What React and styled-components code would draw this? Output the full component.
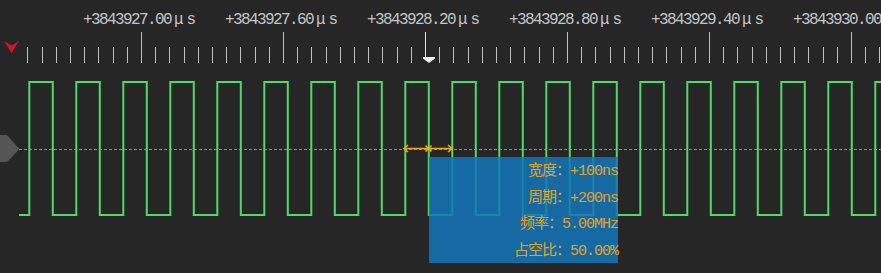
import React from "react";
import styled, { createGlobalStyle } from "styled-components";

const GlobalStyle = createGlobalStyle`
  html, body {
    margin: 0;
    padding: 0;
    background: #262626;
  }
`;

const TICK = 14.2;
const MAJOR0 = 141;
const PERIOD = 47;
const RISE0 = 29.3;
const HIGH_Y = 12;
const LOW_Y = 145;

const labels = [
  "+3843927.00",
  "+3843927.60",
  "+3843928.20",
  "+3843928.80",
  "+3843929.40",
  "+3843930.00",
];

const Screen = styled.div`
  width: 881px;
  height: 273px;
  overflow: hidden;
  background: #262626;
  display: flex;
  flex-direction: column;
  font-family: "Liberation Mono", "Noto Sans CJK SC", monospace;
`;

const Ruler = styled.div`
  height: 70px;
  display: flex;
  flex-direction: column;
`;

const LabelRow = styled.div`
  height: 32px;
  display: flex;
  padding-left: 70px;
  white-space: nowrap;
`;

const Label = styled.div`
  width: 142px;
  flex: none;
  text-align: center;
  line-height: 40px;
  font-size: 16px;
  letter-spacing: -1.6px;
  color: #c4c4c4;
`;

const Unit = styled.span`
  letter-spacing: 3px;
  margin-left: 3px;
`;

const TickSvg = styled.svg`
  display: block;
`;

const Scope = styled.div`
  position: relative;
  flex: 1;
`;

const WaveSvg = styled.svg`
  display: block;
`;

const Readout = styled.div`
  position: absolute;
  left: 429px;
  top: 87px;
  width: 189px;
  height: 106px;
  background: rgba(20, 118, 184, 0.86);
  display: flex;
  flex-direction: column;
  align-items: flex-end;
`;

const ReadoutLine = styled.div`
  height: 26.5px;
  line-height: 29px;
  font-size: 15px;
  letter-spacing: -1px;
  color: #e5a21f;
  white-space: nowrap;
`;

function Ticks() {
  const items = [];
  for (let k = -8; k <= 52; k++) {
    const x = Math.round(MAJOR0 + k * TICK) + 0.5;
    const major = k % 10 === 0;
    const cursor = k === 20;
    items.push(
      <line
        key={k}
        x1={x}
        x2={x}
        y1={major ? 0 : 15}
        y2={cursor ? 25 : 31}
        stroke={cursor ? "#e8e8e8" : "#bdbdbd"}
        strokeWidth="1"
      />
    );
  }
  return (
    <TickSvg width="881" height="38" viewBox="0 0 881 38">
      <polygon points="4,9 11.5,13.5 19,9 11.5,21" fill="#d5132b" />
      {items}
      <polygon points="423,25 435,25 435,26.5 429,31 423,26.5" fill="#f2f2f2" />
    </TickSvg>
  );
}

function wavePath() {
  let d = `M19 ${LOW_Y}`;
  for (let k = 0; k < 19; k++) {
    const rise = RISE0 + k * PERIOD;
    const fall = rise + PERIOD / 2;
    if (rise > 881) break;
    d += ` H${rise.toFixed(1)} V${HIGH_Y} H${fall.toFixed(1)} V${LOW_Y}`;
  }
  d += " H881";
  return d;
}

function Wave() {
  return (
    <WaveSvg width="881" height="203" viewBox="0 0 881 203">
      <polygon points="0,65 7,65 19.5,79 7,92 0,92" fill="#555555" />
      <line
        x1="19"
        x2="881"
        y1="79.5"
        y2="79.5"
        stroke="#8e8e8e"
        strokeWidth="1"
        strokeDasharray="3 2"
      />
      <path d={wavePath()} fill="none" stroke="#52d866" strokeWidth="2" />
      <g stroke="#f0a818" strokeWidth="1.6" fill="none">
        <line x1="404" x2="452" y1="78.5" y2="78.5" />
        <polyline points="408,75 404,78.5 408,82" />
        <polyline points="448,75 452,78.5 448,82" />
        <line x1="425.5" x2="431.5" y1="75.5" y2="81.5" />
        <line x1="431.5" x2="425.5" y1="75.5" y2="81.5" />
      </g>
    </WaveSvg>
  );
}

export default function App() {
  return (
    <Screen>
      <GlobalStyle />
      <Ruler>
        <LabelRow>
          {labels.map((l) => (
            <Label key={l}>
              {l}
              <Unit>μs</Unit>
            </Label>
          ))}
        </LabelRow>
        <Ticks />
      </Ruler>
      <Scope>
        <Wave />
        <Readout>
          <ReadoutLine>宽度：+100ns</ReadoutLine>
          <ReadoutLine>周期：+200ns</ReadoutLine>
          <ReadoutLine>频率：5.00MHz</ReadoutLine>
          <ReadoutLine>占空比：50.00%</ReadoutLine>
        </Readout>
      </Scope>
    </Screen>
  );
}
